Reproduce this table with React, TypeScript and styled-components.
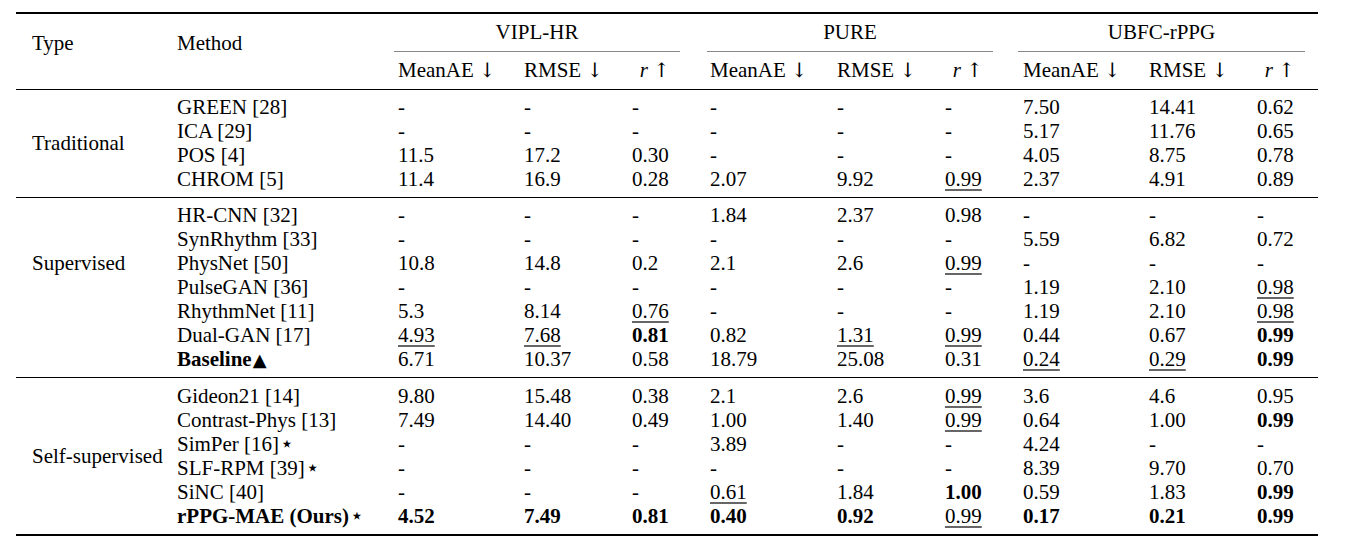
import styled, { createGlobalStyle } from "styled-components";

// column widths, measured from the table's left rule edge
const COLS =
  "161px 221px 126px 108px 78px 127px 108px 78px 126px 108px 61px";

type Row = {
  method: string;
  strong?: boolean;
  mark?: "star" | "tri";
  values: string[];
};

type Section = { type: string; span: number; rows: Row[] };

// "*" prefix = bold, "_" prefix = underlined (second best)
const sections: Section[] = [
  {
    type: "Traditional",
    span: 4,
    rows: [
      { method: "GREEN [28]", values: ["-", "-", "-", "-", "-", "-", "7.50", "14.41", "0.62"] },
      { method: "ICA [29]", values: ["-", "-", "-", "-", "-", "-", "5.17", "11.76", "0.65"] },
      { method: "POS [4]", values: ["11.5", "17.2", "0.30", "-", "-", "-", "4.05", "8.75", "0.78"] },
      { method: "CHROM [5]", values: ["11.4", "16.9", "0.28", "2.07", "9.92", "_0.99", "2.37", "4.91", "0.89"] },
    ],
  },
  {
    type: "Supervised",
    span: 5,
    rows: [
      { method: "HR-CNN [32]", values: ["-", "-", "-", "1.84", "2.37", "0.98", "-", "-", "-"] },
      { method: "SynRhythm [33]", values: ["-", "-", "-", "-", "-", "-", "5.59", "6.82", "0.72"] },
      { method: "PhysNet [50]", values: ["10.8", "14.8", "0.2", "2.1", "2.6", "_0.99", "-", "-", "-"] },
      { method: "PulseGAN [36]", values: ["-", "-", "-", "-", "-", "-", "1.19", "2.10", "_0.98"] },
      { method: "RhythmNet [11]", values: ["5.3", "8.14", "_0.76", "-", "-", "-", "1.19", "2.10", "_0.98"] },
      { method: "Dual-GAN [17]", values: ["_4.93", "_7.68", "*0.81", "0.82", "_1.31", "_0.99", "0.44", "0.67", "*0.99"] },
      { method: "Baseline", strong: true, mark: "tri", values: ["6.71", "10.37", "0.58", "18.79", "25.08", "0.31", "_0.24", "_0.29", "*0.99"] },
    ],
  },
  {
    type: "Self-supervised",
    span: 6,
    rows: [
      { method: "Gideon21 [14]", values: ["9.80", "15.48", "0.38", "2.1", "2.6", "_0.99", "3.6", "4.6", "0.95"] },
      { method: "Contrast-Phys [13]", values: ["7.49", "14.40", "0.49", "1.00", "1.40", "_0.99", "0.64", "1.00", "*0.99"] },
      { method: "SimPer [16]", mark: "star", values: ["-", "-", "-", "3.89", "-", "-", "4.24", "-", "-"] },
      { method: "SLF-RPM [39]", mark: "star", values: ["-", "-", "-", "-", "-", "-", "8.39", "9.70", "0.70"] },
      { method: "SiNC [40]", values: ["-", "-", "-", "_0.61", "1.84", "*1.00", "0.59", "1.83", "*0.99"] },
      { method: "rPPG-MAE (Ours)", strong: true, mark: "star", values: ["*4.52", "*7.49", "*0.81", "*0.40", "*0.92", "_0.99", "*0.17", "*0.21", "*0.99"] },
    ],
  },
];

const groups = [
  { title: "VIPL-HR", col: 3, trimL: 4, trimR: 30 },
  { title: "PURE", col: 6, trimL: 3, trimR: 30 },
  { title: "UBFC-rPPG", col: 9, trimL: 5, trimR: 13 },
];

const metrics = ["MeanAE", "RMSE", "r"];

function Metric({ name }: { name: string }) {
  if (name === "r") {
    return (
      <>
        <i>r</i> <Arrow>↑</Arrow>
      </>
    );
  }
  return (
    <>
      {name} <Arrow>↓</Arrow>
    </>
  );
}

function Value({ raw, row, col }: { raw: string; row: number; col: number }) {
  const strong = raw.startsWith("*");
  const under = raw.startsWith("_");
  const text = strong || under ? raw.slice(1) : raw;
  return (
    <ValueCell $row={row} $col={col} $strong={strong}>
      {under ? <Under>{text}</Under> : text}
    </ValueCell>
  );
}

export default function App() {
  return (
    <>
      <GlobalStyle />
      <Table>
        <Header>
          <HeadLabel $col={1} $pad={16}>Type</HeadLabel>
          <HeadLabel $col={2} $pad={0}>Method</HeadLabel>
          {groups.map((g) => (
            <GroupTitle key={g.title} $col={g.col} $trimL={g.trimL} $trimR={g.trimR}>
              {g.title}
            </GroupTitle>
          ))}
          {groups.map((g) => (
            <CmidRule key={g.title + "-rule"} $col={g.col} $trimL={g.trimL} $trimR={g.trimR} />
          ))}
          {groups.map((g) =>
            metrics.map((m, i) => (
              <SubHead key={g.title + m} $col={g.col + i} $right={m === "r"}>
                <Metric name={m} />
              </SubHead>
            ))
          )}
        </Header>

        {sections.map((s) => (
          <SectionGrid key={s.type}>
            <TypeCell $span={s.span}>{s.type}</TypeCell>
            {s.rows.map((r, ri) => (
              <RowGroup key={r.method}>
                <MethodCell $row={ri + 1} $strong={!!r.strong}>
                  {r.method}
                  {r.mark === "tri" && <Tri>▲</Tri>}
                  {r.mark === "star" && <Star>⋆</Star>}
                </MethodCell>
                {r.values.map((v, vi) => (
                  <Value key={vi} raw={v} row={ri + 1} col={vi + 3} />
                ))}
              </RowGroup>
            ))}
          </SectionGrid>
        ))}
      </Table>
    </>
  );
}

const GlobalStyle = createGlobalStyle`
  html, body {
    margin: 0;
    padding: 0;
    background: #fff;
  }
  body {
    font-family: "Liberation Serif", "Times New Roman", serif;
    color: #000;
  }
`;

const Table = styled.div`
  margin: 12px 0 0 16px;
  width: 1302px;
  border-top: 2px solid #000;
  border-bottom: 2px solid #000;
  font-size: 21px;
  line-height: 24px;
`;

const Header = styled.div`
  display: grid;
  grid-template-columns: ${COLS};
  grid-template-rows: 37px 1px 37px;
  border-bottom: 1px solid #000;
`;

const HeadLabel = styled.div<{ $col: number; $pad: number }>`
  grid-row: 1 / span 3;
  grid-column: ${(p) => p.$col};
  padding-top: 17px;
  padding-left: ${(p) => p.$pad}px;
`;

const GroupTitle = styled.div<{ $col: number; $trimL: number; $trimR: number }>`
  grid-row: 1;
  grid-column: ${(p) => p.$col} / span 3;
  margin: 0 ${(p) => p.$trimR}px 0 -${(p) => p.$trimL}px;
  padding-top: 6px;
  text-align: center;
`;

const CmidRule = styled.div<{ $col: number; $trimL: number; $trimR: number }>`
  grid-row: 2;
  grid-column: ${(p) => p.$col} / span 3;
  margin: 0 ${(p) => p.$trimR}px 0 -${(p) => p.$trimL}px;
  background: #888;
`;

const SubHead = styled.div<{ $col: number; $right: boolean }>`
  grid-row: 3;
  grid-column: ${(p) => p.$col};
  padding-top: 6px;
  white-space: nowrap;
  width: ${(p) => (p.$right ? "38px" : "auto")};
  text-align: ${(p) => (p.$right ? "right" : "left")};
`;

const Arrow = styled.span`
  font-family: "DejaVu Serif", serif;
  font-size: 20px;
  font-weight: 300;
`;

const SectionGrid = styled.div`
  display: grid;
  grid-template-columns: ${COLS};
  grid-auto-rows: 24px;
  padding: 5px 0 6px;
  border-bottom: 1px solid #000;

  &:last-child {
    border-bottom: none;
    padding-top: 6px;
  }
`;

const RowGroup = styled.div`
  display: contents;
`;

const TypeCell = styled.div<{ $span: number }>`
  grid-column: 1;
  grid-row: 1 / span ${(p) => p.$span};
  align-self: center;
  padding-left: 16px;
  white-space: nowrap;
`;

const MethodCell = styled.div<{ $row: number; $strong: boolean }>`
  grid-column: 2;
  grid-row: ${(p) => p.$row};
  font-weight: ${(p) => (p.$strong ? 700 : 400)};
  white-space: nowrap;
`;

const ValueCell = styled.div<{ $row: number; $col: number; $strong: boolean }>`
  grid-column: ${(p) => p.$col};
  grid-row: ${(p) => p.$row};
  font-weight: ${(p) => (p.$strong ? 700 : 400)};
  white-space: nowrap;
`;

const Under = styled.span`
  text-decoration: underline;
  text-decoration-color: #666;
  text-decoration-thickness: 1.5px;
  text-underline-offset: 3px;
`;

const Tri = styled.span`
  font-family: "DejaVu Sans", sans-serif;
  font-size: 18px;
  font-weight: 400;
  margin-left: 1px;
`;

const Star = styled.span`
  font-family: "DejaVu Sans", sans-serif;
  font-size: 22px;
  font-weight: 400;
  margin-left: 1px;
`;
